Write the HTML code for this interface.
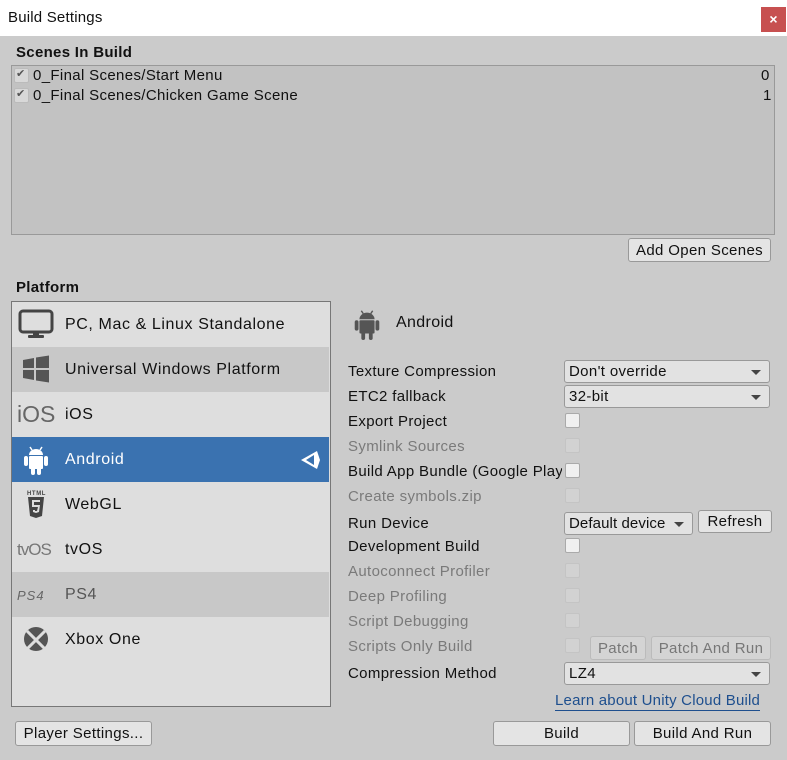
<!DOCTYPE html>
<html><head><style>
*{margin:0;padding:0;box-sizing:border-box}
body{width:787px;height:760px;background:#cbcbcb;font-family:"Liberation Sans",sans-serif;font-size:15px;color:#111;position:relative;overflow:hidden;letter-spacing:0.35px}
.a{position:absolute;white-space:nowrap}
.title{left:0;top:0;width:787px;height:36px;background:#fff}
.close{left:761px;top:7px;width:25px;height:25px;background:#c75050;color:#fff;text-align:center;line-height:24px;font-size:14px;font-weight:bold;letter-spacing:0}
.b{font-weight:bold}
.scenes{left:11px;top:65px;width:764px;height:170px;background:#c2c2c2;border:1px solid #999}
.cb{position:absolute;width:15px;height:15px;background:#f0f0f0;border:1px solid #aaa;border-radius:2px}
.cbd{background:#d2d2d2;border-color:#c4c4c4}
.btn{position:absolute;background:#e4e4e4;border:1px solid #999;border-radius:3px;text-align:center;font-size:15px}
.list{left:11px;top:301px;width:320px;height:406px;background:#dedede;border:1px solid #777}
.row{position:absolute;left:1px;width:317px;height:45px;line-height:45px;padding-left:53px;font-size:16px;letter-spacing:0.6px}
.ic{position:absolute;left:6px;top:6px}
.lab{position:absolute;left:348px;font-size:15px}
.dis{color:#7a7a7a}
.dd{position:absolute;background:#e2e2e2;border:1px solid #999;border-radius:3px;height:23px;line-height:21px;padding-left:4px;font-size:15px}
.dd:after{content:"";position:absolute;right:8px;top:9px;border-left:5px solid transparent;border-right:5px solid transparent;border-top:5px solid #444}
</style></head><body>
<div class="a title"></div>
<div class="a" style="left:8px;top:9px;font-size:15px;color:#111;letter-spacing:0.2px">Build Settings</div>
<div class="a close">×</div>

<div class="a b" style="left:16px;top:44px;letter-spacing:0.3px">Scenes In Build</div>
<div class="a scenes"></div>
<div class="cb" style="left:14px;top:68px;background:#d8d8d8;border-color:#bbb"></div>
<div class="a" style="left:16px;top:67px;font-size:11px;color:#555">✔</div>
<div class="a" style="left:33px;top:67px">0_Final Scenes/Start Menu</div>
<div class="a" style="left:761px;top:67px">0</div>
<div class="cb" style="left:14px;top:88px;background:#d8d8d8;border-color:#bbb"></div>
<div class="a" style="left:16px;top:87px;font-size:11px;color:#555">✔</div>
<div class="a" style="left:33px;top:87px">0_Final Scenes/Chicken Game Scene</div>
<div class="a" style="left:763px;top:87px">1</div>
<div class="btn" style="left:628px;top:238px;width:143px;height:24px;line-height:23px">Add Open Scenes</div>

<div class="a b" style="left:16px;top:279px;letter-spacing:0.3px">Platform</div>
<div class="a list"></div>
<div class="row a" style="top:302px;left:12px">
<svg class="ic" width="36" height="32" viewBox="0 0 36 32"><rect x="2" y="3" width="32" height="21" rx="3" fill="none" stroke="#444" stroke-width="3"/><rect x="15" y="24" width="6" height="4" fill="#444"/><rect x="10" y="27" width="16" height="3" rx="1" fill="#444"/></svg>PC, Mac &amp; Linux Standalone</div>
<div class="row a" style="top:347px;left:12px;background:#c8c8c8">
<svg class="ic" width="36" height="32" viewBox="0 0 36 32"><path d="M5 7l11-2v10H5zM18 4.5l13-2V15H18zM5 17h11v10L5 25zM18 17h13v12.5l-13-2z" fill="#555"/></svg>Universal Windows Platform</div>
<div class="row a" style="top:392px;left:12px">
<span class="a" style="left:5px;top:0;font-size:23px;color:#666;line-height:45px;letter-spacing:0">iOS</span>iOS</div>
<div class="row a" style="top:437px;left:12px;background:#3a72b0;color:#fff">
<svg class="ic" width="36" height="34" viewBox="0 0 36 34"><path d="M11 12a7 6 0 0 1 14 0z" fill="#fff"/><path d="M12 4l2 3M24 4l-2 3" stroke="#fff" stroke-width="1.5"/><rect x="11" y="13" width="14" height="13" rx="1" fill="#fff"/><rect x="6" y="13" width="4" height="10" rx="2" fill="#fff"/><rect x="26" y="13" width="4" height="10" rx="2" fill="#fff"/><rect x="13" y="24" width="4" height="8" rx="2" fill="#fff"/><rect x="19" y="24" width="4" height="8" rx="2" fill="#fff"/></svg>Android
<svg class="a" style="left:287px;top:12px" width="22" height="22" viewBox="0 0 22 22"><path d="M2 11L18 2l3 9-3 9z" fill="#fff"/><path d="M7 11l8-5v10z" fill="#3a72b0"/></svg></div>
<div class="row a" style="top:482px;left:12px">
<svg class="ic" width="36" height="34" viewBox="0 0 36 34"><text x="9" y="7" font-size="6" font-weight="bold" fill="#444" font-family="Liberation Sans">HTML</text><path d="M10 9h16l-2 19-6 2-6-2z" fill="#444"/><path d="M14 12h8v2h-6v3h6l-1 7-3 1-3-1v-2h2v1h2l1-4h-6z" fill="#ddd"/></svg>WebGL</div>
<div class="row a" style="top:527px;left:12px">
<span class="a" style="left:5px;top:0;font-size:17px;color:#777;line-height:45px;letter-spacing:-1px">tvOS</span>tvOS</div>
<div class="row a" style="top:572px;left:12px;background:#c8c8c8;color:#555">
<span class="a" style="left:5px;top:1px;font-size:13px;color:#666;font-style:italic;letter-spacing:1px;line-height:45px">PS4</span>PS4</div>
<div class="row a" style="top:617px;left:12px">
<svg class="ic" width="36" height="32" viewBox="0 0 36 32"><circle cx="18" cy="16" r="12" fill="#555"/><path d="M9 8l18 18M27 8L9 26" stroke="#dedede" stroke-width="3"/></svg>Xbox One</div>

<svg class="a" style="left:350px;top:305px" width="34" height="38" viewBox="0 0 36 38"><path d="M10 14a8 7 0 0 1 16 0z" fill="#555"/><path d="M12 5l2 3M24 5l-2 3" stroke="#555" stroke-width="1.5"/><rect x="10" y="15" width="16" height="14" rx="1" fill="#555"/><rect x="5" y="15" width="4" height="11" rx="2" fill="#555"/><rect x="27" y="15" width="4" height="11" rx="2" fill="#555"/><rect x="12" y="27" width="4" height="9" rx="2" fill="#555"/><rect x="20" y="27" width="4" height="9" rx="2" fill="#555"/></svg>
<div class="a" style="left:396px;top:314px;font-size:16px">Android</div>

<div class="lab a" style="top:363px">Texture Compression</div>
<div class="dd" style="left:564px;top:360px;width:206px">Don't override</div>
<div class="lab a" style="top:388px">ETC2 fallback</div>
<div class="dd" style="left:564px;top:385px;width:206px">32-bit</div>
<div class="lab a" style="top:413px">Export Project</div>
<div class="cb" style="left:565px;top:413px"></div>
<div class="lab a dis" style="top:438px">Symlink Sources</div>
<div class="cb cbd" style="left:565px;top:438px"></div>
<div class="lab a" style="top:463px;width:214px;overflow:hidden">Build App Bundle (Google Play)</div>
<div class="cb" style="left:565px;top:463px"></div>
<div class="lab a dis" style="top:488px">Create symbols.zip</div>
<div class="cb cbd" style="left:565px;top:488px"></div>
<div class="lab a" style="top:515px">Run Device</div>
<div class="dd" style="left:564px;top:512px;width:129px;padding-right:20px;letter-spacing:0.1px">Default device</div>
<div class="btn" style="left:698px;top:510px;width:74px;height:23px;line-height:21px">Refresh</div>
<div class="lab a" style="top:538px">Development Build</div>
<div class="cb" style="left:565px;top:538px"></div>
<div class="lab a dis" style="top:563px">Autoconnect Profiler</div>
<div class="cb cbd" style="left:565px;top:563px"></div>
<div class="lab a dis" style="top:588px">Deep Profiling</div>
<div class="cb cbd" style="left:565px;top:588px"></div>
<div class="lab a dis" style="top:613px">Script Debugging</div>
<div class="cb cbd" style="left:565px;top:613px"></div>
<div class="lab a dis" style="top:638px">Scripts Only Build</div>
<div class="cb cbd" style="left:565px;top:638px"></div>
<div class="btn" style="left:590px;top:636px;width:56px;height:24px;line-height:23px;background:#d4d4d4;border-color:#bbb;color:#777">Patch</div>
<div class="btn" style="left:651px;top:636px;width:120px;height:24px;line-height:23px;background:#d4d4d4;border-color:#bbb;color:#777">Patch And Run</div>
<div class="lab a" style="top:665px">Compression Method</div>
<div class="dd" style="left:564px;top:662px;width:206px">LZ4</div>
<div class="a" style="left:555px;top:692px;color:#1e4f8e;border-bottom:1px solid #1e4f8e;padding-bottom:1px;letter-spacing:0.2px">Learn about Unity Cloud Build</div>
<div class="btn" style="left:493px;top:721px;width:137px;height:25px;line-height:24px">Build</div>
<div class="btn" style="left:634px;top:721px;width:137px;height:25px;line-height:24px">Build And Run</div>
<div class="btn" style="left:15px;top:721px;width:137px;height:25px;line-height:24px">Player Settings...</div>
</body></html>
